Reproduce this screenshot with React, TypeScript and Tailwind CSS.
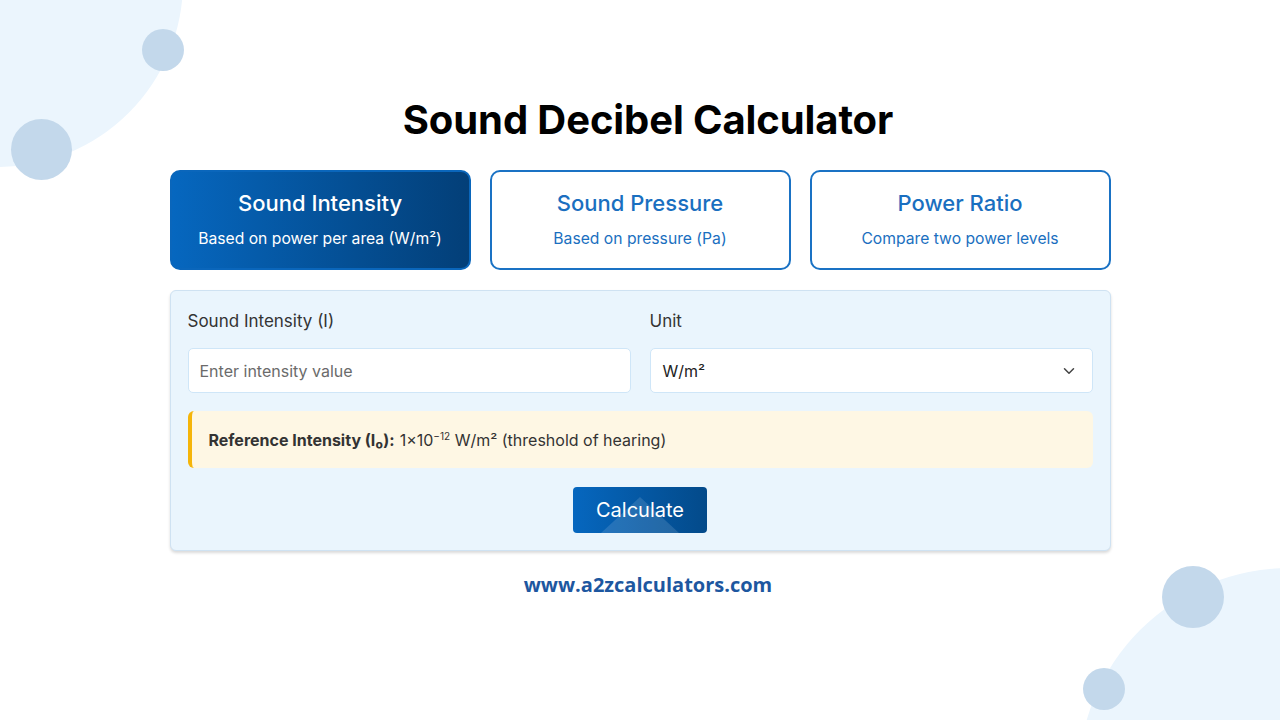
import { ChevronDown } from "lucide-react";

const tabs = [
  { title: "Sound Intensity", sub: "Based on power per area (W/m²)", active: true },
  { title: "Sound Pressure", sub: "Based on pressure (Pa)", active: false },
  { title: "Power Ratio", sub: "Compare two power levels", active: false },
];

export default function App() {
  return (
    <div className="relative w-[1280px] h-[720px] overflow-hidden bg-white font-['Inter',sans-serif]">
      {/* background decorations */}
      <div className="absolute -left-[18px] -top-[18px] w-[402px] h-[370px] -translate-x-1/2 -translate-y-1/2 rounded-full bg-[#ebf5fd]" />
      <div className="absolute left-[142px] top-[29px] w-[42px] h-[42px] rounded-full bg-[#c3d8eb]" />
      <div className="absolute left-[11px] top-[119px] w-[61px] h-[61px] rounded-full bg-[#c3d8eb]" />
      <div className="absolute left-[1078px] top-[568px] w-[424px] h-[424px] rounded-full bg-[#ebf5fd]" />
      <div className="absolute left-[1162px] top-[566px] w-[62px] h-[62px] rounded-full bg-[#c3d8eb]" />
      <div className="absolute left-[1083px] top-[668px] w-[42px] h-[42px] rounded-full bg-[#c3d8eb]" />

      <div className="relative flex flex-col items-center pt-[95px]">
        <h1 className="translate-x-[8px] text-[40px] leading-[50px] font-bold text-black tracking-[-0.1px]">
          Sound Decibel Calculator
        </h1>

        <div className="mt-[25px] w-[941px] grid grid-cols-3 gap-[19px]">
          {tabs.map((t) => (
            <div
              key={t.title}
              className={
                t.active
                  ? "h-[100px] rounded-[10px] border-2 border-[#0a66bb] bg-gradient-to-r from-[#0667bf] to-[#033f78] flex flex-col items-center justify-center gap-[12px] pb-[3px] text-white"
                  : "h-[100px] rounded-[10px] border-2 border-[#1a72c4] bg-white flex flex-col items-center justify-center gap-[12px] pb-[3px] text-[#1a6fc0]"
              }
            >
              <div className="text-[22px] leading-[28px] font-medium">{t.title}</div>
              <div className="text-[15.7px] leading-[20px]">{t.sub}</div>
            </div>
          ))}
        </div>

        <div className="mt-[20px] w-[941px] rounded-[6px] border border-[#cfe2f2] bg-[#eaf5fd] shadow-[0_2px_3px_rgba(0,0,0,0.15)] px-[17px] pt-[18px] pb-[17px]">
          <div className="grid grid-cols-2 gap-[19px]">
            <div>
              <div className="text-[17px] leading-[24px] text-[#333]">Sound Intensity (I)</div>
              <div className="mt-[15px] h-[45px] rounded-[5px] border border-[#cfe6f8] bg-white flex items-center px-[11px] text-[16px] text-[#6b6b6b]">
                Enter intensity value
              </div>
            </div>
            <div>
              <div className="text-[17px] leading-[24px] text-[#333]">Unit</div>
              <div className="mt-[15px] h-[45px] rounded-[5px] border border-[#cfe6f8] bg-white flex items-center justify-between pl-[12px] pr-[14px] text-[16px] text-[#222]">
                <span>W/m²</span>
                <ChevronDown size={18} strokeWidth={2} className="text-[#444]" />
              </div>
            </div>
          </div>

          <div className="mt-[18px] h-[57px] rounded-[6px] border-l-[4px] border-[#f5b50a] bg-[#fef7e4] flex items-center pl-[17px] text-[16px] text-[#333]">
            <span className="font-bold mr-[5px]">Reference Intensity (I₀):</span>
            <span>
              1×10<sup className="text-[10px] -top-[6px]">−12</sup> W/m² (threshold of hearing)
            </span>
          </div>

          <div className="mt-[19px] flex justify-center">
            <button className="relative w-[134px] h-[46px] rounded-[4px] bg-gradient-to-r from-[#0667bf] to-[#034a8a] overflow-hidden text-white text-[20px]">
              <svg className="absolute left-[28px] top-[10px]" width="78" height="36" viewBox="0 0 78 36">
                <polygon points="39,0 78,36 0,36" fill="rgba(255,255,255,0.13)" />
              </svg>
              <span className="relative">Calculate</span>
            </button>
          </div>
        </div>

        <div className="mt-[19px] translate-x-[8px] text-[20px] font-bold text-[#1d57a0] font-['Open_Sans',sans-serif]">
          www.a2zcalculators.com
        </div>
      </div>
    </div>
  );
}
